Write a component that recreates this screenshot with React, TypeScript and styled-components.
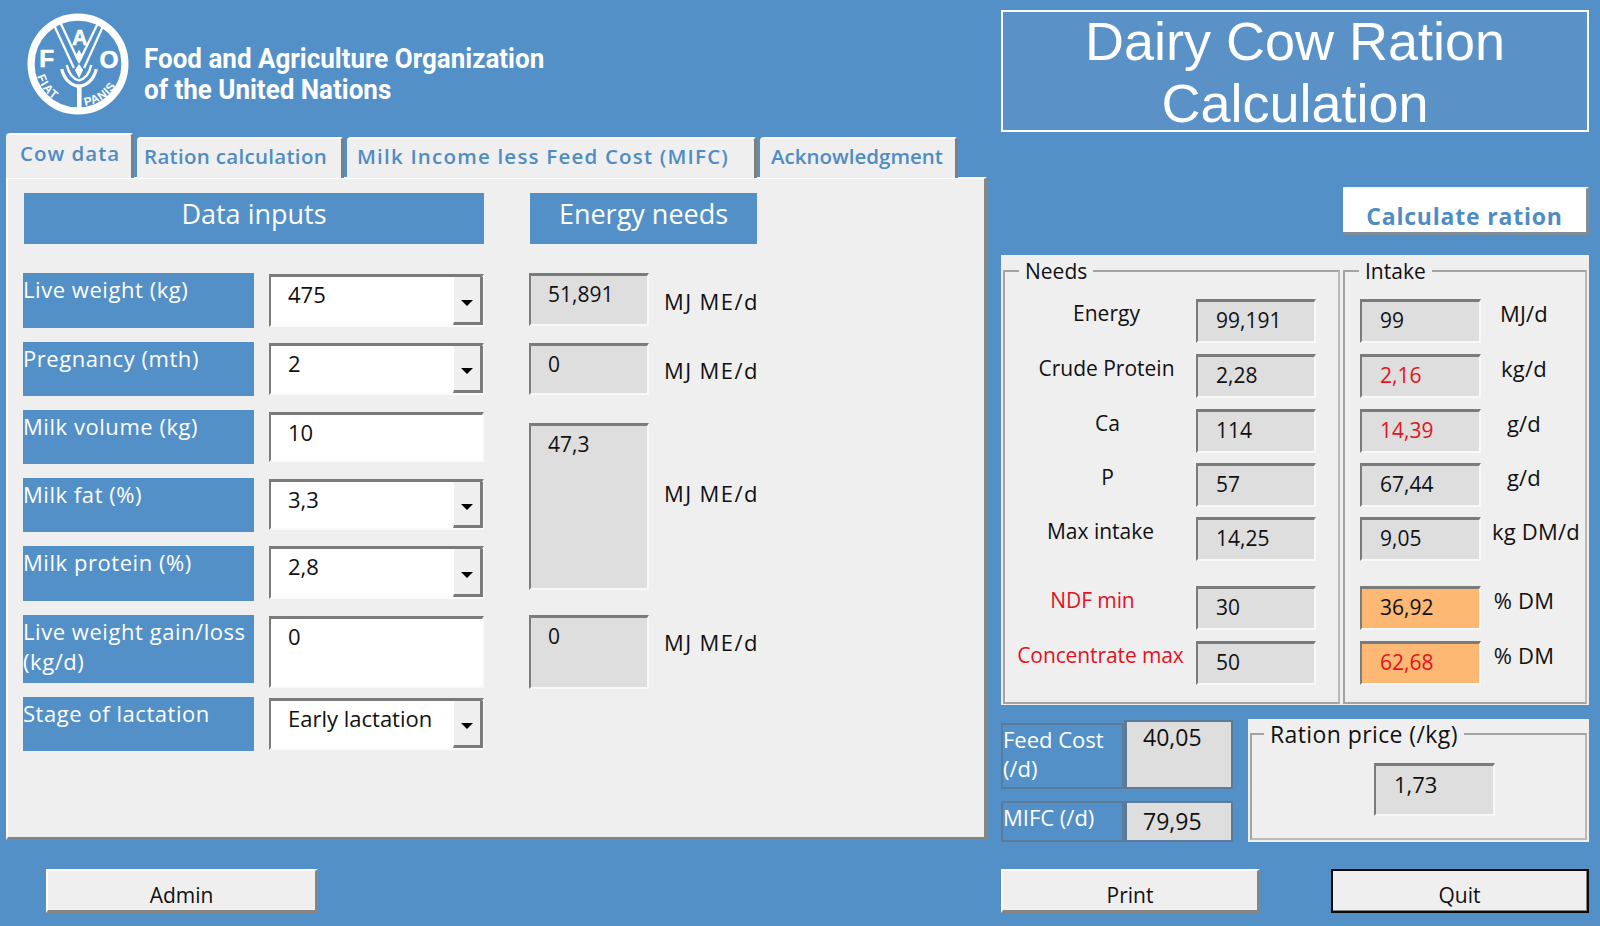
import React from "react";
import styled, { createGlobalStyle } from "styled-components";

const BLUE = "#5390c8";
const PANEL = "#efefef";
const FONT = '"Open Sans", "Noto Sans", sans-serif';

const Global = createGlobalStyle`
  html, body { margin: 0; padding: 0; background: ${BLUE}; }
  * { box-sizing: border-box; }
`;

const Page = styled.div`
  width: 1600px;
  height: 926px;
  overflow: hidden;
  background: ${BLUE};
  display: grid;
  grid-template-columns: 987px 588px;
  column-gap: 14px;
  font-family: ${FONT};
  font-size: 21px;
  line-height: 28px;
  color: #111;
`;

const LeftColumn = styled.div`
  padding-left: 6px;
  display: flex;
  flex-direction: column;
`;

const Brand = styled.header`
  height: 133px;
  flex: none;
  padding: 13px 0 0 21px;
  display: flex;
  align-items: flex-start;
  gap: 15px;
`;

const Wordmark = styled.div`
  margin-top: 30px;
  font-family: Roboto, "Liberation Sans", sans-serif;
  font-weight: 700;
  font-size: 27.5px;
  line-height: 31px;
  color: #fff;
  white-space: nowrap;
  transform: scaleX(0.945);
  transform-origin: left top;
`;

const TabBar = styled.nav`
  height: 45px;
  flex: none;
  display: flex;
  align-items: flex-end;
  gap: 3px;
  position: relative;
  z-index: 1;
  margin-bottom: -1px;
`;

const Tab = styled.div<{ $active?: boolean; $w: number; $track: number; $pad: number }>`
  width: ${(p) => p.$w}px;
  height: ${(p) => (p.$active ? 45 : 41)}px;
  background: ${PANEL};
  border-top: 2px solid #fff;
  border-right: 3px solid #7f7f7f;
  border-radius: 4px 4px 0 0;
  color: #4f8cc3;
  font-weight: 600;
  font-size: 20.5px;
  letter-spacing: ${(p) => p.$track}px;
  line-height: ${(p) => (p.$active ? 36 : 34)}px;
  padding-left: ${(p) => p.$pad}px;
  white-space: nowrap;
`;

const Panel = styled.main`
  width: 981px;
  height: 663px;
  flex: none;
  background: ${PANEL};
  border-top: 2px solid #fff;
  border-left: 2px solid #fbfbfb;
  border-right: 3px solid #858585;
  border-bottom: 3px solid #858585;
  padding: 14px 0 0 15px;
`;

const Headers = styled.div`
  display: flex;
  gap: 46px;
  margin-left: 1px;
  margin-bottom: 29px;
`;

const SectionHeader = styled.div<{ $w: number }>`
  width: ${(p) => p.$w}px;
  height: 51px;
  background: ${BLUE};
  color: #fff;
  font-size: 27px;
  line-height: 42px;
  text-align: center;
`;

const FormGrid = styled.div`
  display: grid;
  grid-template-columns: 231px 215px 150px 1fr;
  grid-template-rows: 69px 68px 68px 68px 69px 82px 68px;
  column-gap: 15px;
  font-size: 22px;
`;

const FieldLabel = styled.div<{ $row: number }>`
  grid-column: 1;
  grid-row: ${(p) => p.$row};
  background: ${BLUE};
  color: #fff;
  margin-bottom: 14px;
  padding-top: 1px;
  line-height: 30px;
  letter-spacing: 0.55px;
`;

const Input = styled.div<{ $row: number; $top: number; $h: number }>`
  grid-column: 2;
  grid-row: ${(p) => p.$row};
  margin-top: ${(p) => p.$top}px;
  height: ${(p) => p.$h}px;
  background: #fff;
  border-top: 3px solid #7b7b7b;
  border-left: 2px solid #7b7b7b;
  border-right: 2px solid #fafafa;
  border-bottom: 2px solid #fafafa;
  padding: 3px 0 0 17px;
  position: relative;
`;

const ComboButton = styled.div`
  position: absolute;
  top: 0;
  right: -1px;
  bottom: 0;
  width: 30px;
  background: ${PANEL};
  border-right: 3px solid #7b7b7b;
  border-bottom: 3px solid #7b7b7b;
  border-left: 1px solid #fff;
  display: flex;
  align-items: center;
  justify-content: center;
  padding-top: 6px;
`;

const ComboArrow = styled.span`
  width: 0;
  height: 0;
  border-left: 6px solid transparent;
  border-right: 6px solid transparent;
  border-top: 6px solid #000;
`;

const Box = styled.div<{ $tint?: string; $color?: string }>`
  background: ${(p) => p.$tint || "#dedede"};
  color: ${(p) => p.$color || "#111"};
  border-top: 3px solid #7b7b7b;
  border-left: 2px solid #7b7b7b;
  border-right: 2px solid #f8f8f8;
  border-bottom: 2px solid #f8f8f8;
`;

const EnergyBox = styled(Box)<{ $row: number; $span?: number; $top: number; $h: number }>`
  grid-column: 3;
  grid-row: ${(p) => p.$row} / span ${(p) => p.$span || 1};
  justify-self: end;
  width: 120px;
  margin-top: ${(p) => p.$top}px;
  height: ${(p) => p.$h}px;
  padding: 4px 0 0 17px;
  font-size: 21px;
`;

const EnergyUnit = styled.div<{ $row: number; $span?: number; $top: number }>`
  grid-column: 4;
  grid-row: ${(p) => p.$row} / span ${(p) => p.$span || 1};
  margin-top: ${(p) => p.$top}px;
  letter-spacing: 1.4px;
`;

const Footer = styled.footer`
  margin-top: 29px;
  padding-left: 40px;
`;

const PushButton = styled.button<{ $w: number; $focus?: boolean }>`
  width: ${(p) => p.$w}px;
  height: 44px;
  padding: 9px 0 0;
  background: ${PANEL};
  border: none;
  border-top: 2px solid #fff;
  border-left: 2px solid #fff;
  border-right: 3px solid #858585;
  border-bottom: 3px solid #858585;
  outline: ${(p) => (p.$focus ? "2px solid #0a0a0a" : "none")};
  outline-offset: -2px;
  font: inherit;
  font-size: 21px;
  line-height: 28px;
  color: #111;
  text-align: center;
`;

const RightColumn = styled.div`
  display: flex;
  flex-direction: column;
  align-items: stretch;
  padding-top: 10px;
`;

const TitleBox = styled.h1`
  margin: 0;
  height: 122px;
  flex: none;
  border: 2px solid #fff;
  padding-top: 2px;
  background: #5a92c7;
  color: #fff;
  font-family: "Liberation Sans", Arial, sans-serif;
  font-weight: 400;
  font-size: 54px;
  line-height: 62px;
  text-align: center;
  display: flex;
  flex-direction: column;
  justify-content: center;
`;

const TitleText = styled.span`
  display: block;
`;

const CalcButton = styled.button`
  margin: 55px 0 0 auto;
  width: 246px;
  height: 48px;
  flex: none;
  padding: 11px 0 0 0;
  background: #fff;
  border: none;
  border-top: 2px solid #f4f4f4;
  border-right: 3px solid #7f8c98;
  border-bottom: 3px solid #7f8c98;
  font: inherit;
  font-size: 23px;
  font-weight: 700;
  letter-spacing: 0.8px;
  color: #4f8cc3;
  white-space: nowrap;
`;

const NeedsPanel = styled.section`
  margin-top: 20px;
  height: 450px;
  flex: none;
  background: ${PANEL};
  padding: 2px 2px 1px 2px;
  display: grid;
  grid-template-columns: 337px 1fr;
  column-gap: 3px;
`;

const Group = styled.fieldset`
  margin: 0;
  min-width: 0;
  border: 2px solid #a3a3a3;
  border-right-color: #b8b8b8;
  padding: 14px 0 0;
`;

const GroupLegend = styled.legend`
  margin-left: 14px;
  padding: 0 6px;
  font-size: 21px;
  line-height: 28px;
  color: #111;
`;

const PriceLegend = styled(GroupLegend)`
  font-size: 23px;
  letter-spacing: 0.4px;
  margin-left: 12px;
`;

const ValueRows = styled.div`
  display: grid;
  grid-template-rows: 55px 55px 54px 54px 69px 55px 44px;
`;

const NeedsRows = styled(ValueRows)`
  grid-template-columns: 191px 120px;
`;

const IntakeRows = styled(ValueRows)`
  grid-template-columns: 121px 86px;
  padding-left: 15px;
  font-size: 21px;
`;

const NeedsLabel = styled.div<{ $left?: number; $right?: number; $red?: boolean }>`
  text-align: center;
  padding-left: ${(p) => p.$left || 0}px;
  padding-right: ${(p) => p.$right || 0}px;
  color: ${(p) => (p.$red ? "#e2131f" : "#111")};
  white-space: nowrap;
  letter-spacing: ${(p) => (p.$red ? -0.1 : 0)}px;
`;

const ValueBox = styled(Box)`
  height: 44px;
  padding-left: 18px;
  line-height: 36px;
`;

const IntakeUnit = styled.div<{ $wide?: boolean }>`
  text-align: ${(p) => (p.$wide ? "left" : "center")};
  padding-left: ${(p) => (p.$wide ? 11 : 0)}px;
  white-space: nowrap;
  font-size: 22px;
  letter-spacing: 0.2px;
`;

const CostRow = styled.section`
  margin-top: 14px;
  height: 123px;
  flex: none;
  display: grid;
  grid-template-columns: 232px 341px;
  column-gap: 15px;
`;

const CostStack = styled.div`
  display: flex;
  flex-direction: column;
  padding-top: 1px;
  gap: 12px;
`;

const CostLine = styled.div<{ $h: number }>`
  height: ${(p) => p.$h}px;
  display: grid;
  grid-template-columns: 123px 109px;
  align-items: end;
`;

const CostLabel = styled.div<{ $h: number }>`
  height: ${(p) => p.$h}px;
  background: ${BLUE};
  color: #fff;
  border: 2px solid #5d7a97;
  line-height: 29px;
  font-size: 22px;
`;

const CostValue = styled.div<{ $h: number; $pad: number }>`
  height: ${(p) => p.$h}px;
  background: #dedede;
  border: 2px solid #5d7a97;
  border-left-width: 3px;
  padding: ${(p) => p.$pad}px 0 0 16px;
  font-size: 23px;
`;

const PricePanel = styled.div`
  background: ${PANEL};
  padding: 1px 2px 2px;
  display: flex;
`;

const PriceGroup = styled(Group)`
  flex: 1;
  padding: 15px 0 0;
  border-bottom-color: #bbb;
`;

const PriceBox = styled(Box)`
  margin-left: 122px;
  width: 121px;
  height: 53px;
  padding: 4px 0 0 18px;
  font-size: 22px;
`;

const ButtonRow = styled.div`
  margin-top: 27px;
  display: flex;
  justify-content: space-between;
`;

const Logo = () => (
  <svg width="102" height="102" viewBox="0 0 100 100" aria-hidden="true">
    <defs>
      <path id="arcL" d="M10 62 A42 42 0 0 0 46 92" />
      <path id="arcR" d="M57 91 A42 42 0 0 0 92 60" />
    </defs>
    <circle cx="50" cy="50" r="46" fill="none" stroke="#fff" strokeWidth="7" />
    <g fill="#fff" stroke="#fff" strokeWidth="0.5" fontFamily="Liberation Sans, sans-serif" fontWeight="700">
      <text x="12" y="53" fontSize="24">F</text>
      <text x="44" y="31" fontSize="21">A</text>
      <text x="71" y="54" fontSize="24">O</text>
    </g>
    <g fill="#fff" fontFamily="Liberation Sans, sans-serif" fontWeight="700">
      <text fontSize="11.5" letterSpacing="1.2"><textPath href="#arcL">FIAT</textPath></text>
      <text fontSize="11.5" letterSpacing="0.6"><textPath href="#arcR">PANIS</textPath></text>
    </g>
    <g fill="none" stroke="#fff" strokeWidth="2.2">
      <path d="M27 13 L46 54" />
      <path d="M33 10 L48 42" />
      <path d="M75 12 L56 54" />
      <path d="M70 9 L54 42" />
      <path d="M34 55 Q38 70 51 72 Q64 70 68 55" strokeWidth="3.2" />
      <path d="M39 51 Q42 64 51 66 Q60 64 63 51" strokeWidth="2.4" />
    </g>
    <path d="M51 36 L55 43 L51 50 L47 43 Z M51 50 L55 56 L51 64 L47 56 Z" fill="#fff" />
    <rect x="49" y="70" width="4.5" height="28" fill="#fff" />
  </svg>
);

const Caret = () => (
  <ComboButton>
    <ComboArrow />
  </ComboButton>
);

const fields = [
  { label: "Live weight (kg)", value: "475", top: 1, h: 53, combo: true },
  { label: "Pregnancy (mth)", value: "2", top: 1, h: 52, combo: true },
  { label: "Milk volume (kg)", value: "10", top: 2, h: 50, combo: false },
  { label: "Milk fat (%)", value: "3,3", top: 1, h: 51, combo: true },
  { label: "Milk protein (%)", value: "2,8", top: 0, h: 53, combo: true },
  { label: "Live weight gain/loss (kg/d)", value: "0", top: 1, h: 72, combo: false },
  { label: "Stage of lactation", value: "Early lactation", top: 1, h: 52, combo: true },
];

const energy = [
  { value: "51,891", row: 1, span: 1, top: 0, h: 53, unit: 14 },
  { value: "0", row: 2, span: 1, top: 1, h: 52, unit: 14 },
  { value: "47,3", row: 3, span: 3, top: 13, h: 167, unit: 69 },
  { value: "0", row: 6, span: 1, top: 0, h: 74, unit: 13 },
];

const needs = [
  { label: "Energy", value: "99,191", left: 12 },
  { label: "Crude Protein", value: "2,28", left: 12 },
  { label: "Ca", value: "114", left: 14 },
  { label: "P", value: "57", left: 14 },
  { label: "Max intake", value: "14,25", left: 0 },
  { label: "NDF min", value: "30", right: 16, red: true },
  { label: "Concentrate max", value: "50", red: true },
];

const intake = [
  { value: "99", unit: "MJ/d" },
  { value: "2,16", unit: "kg/d", color: "#e2131f" },
  { value: "14,39", unit: "g/d", color: "#e2131f" },
  { value: "67,44", unit: "g/d" },
  { value: "9,05", unit: "kg DM/d", wide: true },
  { value: "36,92", unit: "% DM", tint: "#fdb973" },
  { value: "62,68", unit: "% DM", tint: "#fdb973", color: "#e2131f" },
];

export default function App() {
  return (
    <Page>
      <Global />
      <LeftColumn>
        <Brand>
          <Logo />
          <Wordmark>
            Food and Agriculture Organization
            <br />
            of the United Nations
          </Wordmark>
        </Brand>
        <TabBar>
          <Tab $active $w={128} $track={1} $pad={14}>Cow data</Tab>
          <Tab $w={207} $track={0.3} $pad={7}>Ration calculation</Tab>
          <Tab $w={410} $track={1.2} $pad={10}>Milk Income less Feed Cost (MIFC)</Tab>
          <Tab $w={198} $track={0} $pad={11}>Acknowledgment</Tab>
        </TabBar>
        <Panel>
          <Headers>
            <SectionHeader $w={460}>Data inputs</SectionHeader>
            <SectionHeader $w={227}>Energy needs</SectionHeader>
          </Headers>
          <FormGrid>
            {fields.map((f, i) => (
              <React.Fragment key={f.label}>
                <FieldLabel $row={i + 1}>{f.label}</FieldLabel>
                <Input $row={i + 1} $top={f.top} $h={f.h}>
                  {f.value}
                  {f.combo && <Caret />}
                </Input>
              </React.Fragment>
            ))}
            {energy.map((e) => (
              <React.Fragment key={e.row}>
                <EnergyBox $row={e.row} $span={e.span} $top={e.top} $h={e.h}>
                  {e.value}
                </EnergyBox>
                <EnergyUnit $row={e.row} $span={e.span} $top={e.unit}>
                  MJ ME/d
                </EnergyUnit>
              </React.Fragment>
            ))}
          </FormGrid>
        </Panel>
        <Footer>
          <PushButton $w={272}>Admin</PushButton>
        </Footer>
      </LeftColumn>
      <RightColumn>
        <TitleBox>
          <TitleText>
            Dairy Cow Ration
            <br />
            Calculation
          </TitleText>
        </TitleBox>
        <CalcButton>Calculate ration</CalcButton>
        <NeedsPanel>
          <Group>
            <GroupLegend>Needs</GroupLegend>
            <NeedsRows>
              {needs.map((n) => (
                <React.Fragment key={n.label}>
                  <NeedsLabel $left={n.left} $right={n.right} $red={n.red}>{n.label}</NeedsLabel>
                  <ValueBox>{n.value}</ValueBox>
                </React.Fragment>
              ))}
            </NeedsRows>
          </Group>
          <Group>
            <GroupLegend>Intake</GroupLegend>
            <IntakeRows>
              {intake.map((n, i) => (
                <React.Fragment key={i}>
                  <ValueBox $tint={n.tint} $color={n.color}>{n.value}</ValueBox>
                  <IntakeUnit $wide={n.wide}>{n.unit}</IntakeUnit>
                </React.Fragment>
              ))}
            </IntakeRows>
          </Group>
        </NeedsPanel>
        <CostRow>
          <CostStack>
            <CostLine $h={69}>
              <CostLabel $h={66}>Feed Cost (/d)</CostLabel>
              <CostValue $h={69} $pad={1}>40,05</CostValue>
            </CostLine>
            <CostLine $h={41}>
              <CostLabel $h={41}>MIFC (/d)</CostLabel>
              <CostValue $h={41} $pad={4}>79,95</CostValue>
            </CostLine>
          </CostStack>
          <PricePanel>
            <PriceGroup>
              <PriceLegend>Ration price (/kg)</PriceLegend>
              <PriceBox>1,73</PriceBox>
            </PriceGroup>
          </PricePanel>
        </CostRow>
        <ButtonRow>
          <PushButton $w={259}>Print</PushButton>
          <PushButton $w={258} $focus>Quit</PushButton>
        </ButtonRow>
      </RightColumn>
    </Page>
  );
}
